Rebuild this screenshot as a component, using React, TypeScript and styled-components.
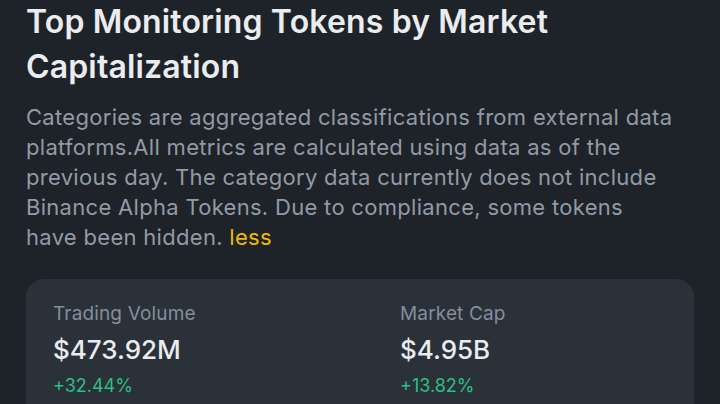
import React from "react";
import styled, { createGlobalStyle } from "styled-components";

const GlobalStyle = createGlobalStyle`
  html, body {
    margin: 0;
    padding: 0;
    background: #1e2329;
  }
  body {
    font-family: Inter, "Noto Sans", sans-serif;
    -webkit-font-smoothing: antialiased;
  }
`;

const Page = styled.main`
  width: 720px;
  height: 404px;
  overflow: hidden;
  box-sizing: border-box;
  padding: 0 26px;
  background: #1e2329;
`;

const Title = styled.h1`
  margin: -1px 0 0;
  font-size: 32px;
  line-height: 45px;
  font-weight: 600;
  letter-spacing: 0.15px;
  color: #eaecef;
`;

const Description = styled.p`
  margin: 13px 0 0;
  font-size: 22px;
  line-height: 30px;
  letter-spacing: 0.3px;
  font-weight: 400;
  color: #929aa5;
  white-space: nowrap;
`;

const Toggle = styled.span`
  color: #f0b90b;
  cursor: pointer;
`;

const StatsCard = styled.section`
  margin-top: 27px;
  background: #2b3139;
  border-radius: 18px;
  padding: 23px 27px 24px;
  display: grid;
  grid-template-columns: repeat(2, 1fr);
  column-gap: 80px;
`;

const Stat = styled.div`
  display: flex;
  flex-direction: column;
`;

const StatLabel = styled.span`
  font-size: 19px;
  line-height: 24px;
  letter-spacing: 0.15px;
  color: #848e9c;
`;

const StatValue = styled.span`
  margin-top: 8px;
  font-size: 26px;
  line-height: 32px;
  font-weight: 500;
  color: #eaecef;
`;

const StatChange = styled.span<{ $up: boolean }>`
  margin-top: 8px;
  font-size: 18px;
  line-height: 24px;
  color: ${(p) => (p.$up ? "#2ebd85" : "#f6465d")};
`;

const stats = [
  { label: "Trading Volume", value: "$473.92M", change: "+32.44%", up: true },
  { label: "Market Cap", value: "$4.95B", change: "+13.82%", up: true },
];

export default function App() {
  return (
    <>
      <GlobalStyle />
      <Page>
        <Title>Top Monitoring Tokens by Market Capitalization</Title>
        <Description>
          Categories are aggregated classifications from external data
          <br />
          platforms.All metrics are calculated using data as of the
          <br />
          previous day. The category data currently does not include
          <br />
          Binance Alpha Tokens. Due to compliance, some tokens
          <br />
          have been hidden. <Toggle>less</Toggle>
        </Description>
        <StatsCard>
          {stats.map((s) => (
            <Stat key={s.label}>
              <StatLabel>{s.label}</StatLabel>
              <StatValue>{s.value}</StatValue>
              <StatChange $up={s.up}>{s.change}</StatChange>
            </Stat>
          ))}
        </StatsCard>
      </Page>
    </>
  );
}
